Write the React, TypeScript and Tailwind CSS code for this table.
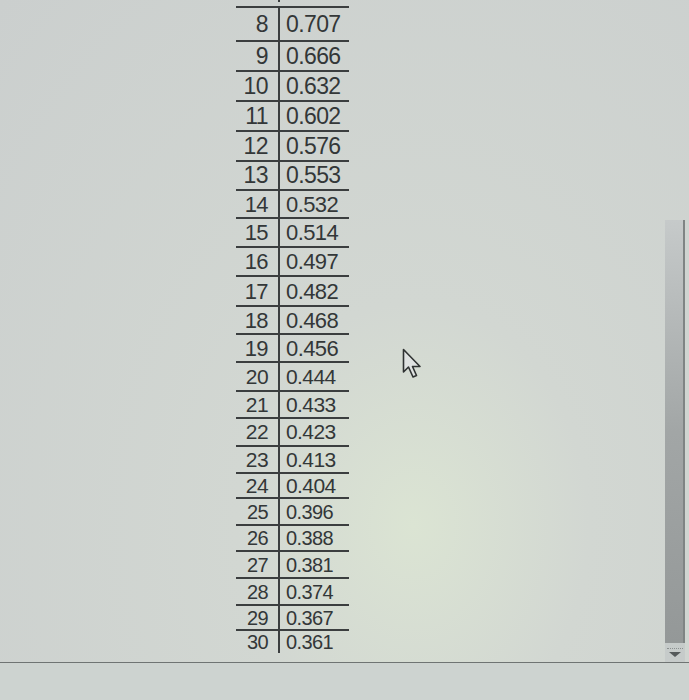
import React from 'react';

interface Fila {
  n: number;
  r: string;
  h: string;
  size: string;
}

// alturas medidas en la foto (la perspectiva achica las filas hacia abajo)
const filas: Fila[] = [
  { n: 7, r: '0.754', h: 'h-[34px]', size: 'text-[23px]' },
  { n: 8, r: '0.707', h: 'h-[34px]', size: 'text-[23px]' },
  { n: 9, r: '0.666', h: 'h-[30px]', size: 'text-[23px]' },
  { n: 10, r: '0.632', h: 'h-[30px]', size: 'text-[23px]' },
  { n: 11, r: '0.602', h: 'h-[30px]', size: 'text-[23px]' },
  { n: 12, r: '0.576', h: 'h-[30px]', size: 'text-[23px]' },
  { n: 13, r: '0.553', h: 'h-[29px]', size: 'text-[23px]' },
  { n: 14, r: '0.532', h: 'h-[28px]', size: 'text-[22px]' },
  { n: 15, r: '0.514', h: 'h-[29px]', size: 'text-[22px]' },
  { n: 16, r: '0.497', h: 'h-[29px]', size: 'text-[22px]' },
  { n: 17, r: '0.482', h: 'h-[30px]', size: 'text-[22px]' },
  { n: 18, r: '0.468', h: 'h-[28px]', size: 'text-[22px]' },
  { n: 19, r: '0.456', h: 'h-[28px]', size: 'text-[22px]' },
  { n: 20, r: '0.444', h: 'h-[29px]', size: 'text-[21px]' },
  { n: 21, r: '0.433', h: 'h-[27px]', size: 'text-[21px]' },
  { n: 22, r: '0.423', h: 'h-[28px]', size: 'text-[21px]' },
  { n: 23, r: '0.413', h: 'h-[27px]', size: 'text-[21px]' },
  { n: 24, r: '0.404', h: 'h-[25px]', size: 'text-[21px]' },
  { n: 25, r: '0.396', h: 'h-[27px]', size: 'text-[20px]' },
  { n: 26, r: '0.388', h: 'h-[26px]', size: 'text-[20px]' },
  { n: 27, r: '0.381', h: 'h-[27px]', size: 'text-[20px]' },
  { n: 28, r: '0.374', h: 'h-[27px]', size: 'text-[20px]' },
  { n: 29, r: '0.367', h: 'h-[25px]', size: 'text-[20px]' },
  { n: 30, r: '0.361', h: 'h-[22px]', size: 'text-[20px]' },
];

const Cursor = () => (
  <svg width="20" height="31" viewBox="0 0 20 31" className="absolute left-[402px] top-[348px]">
    <path
      d="M1.5 1.5 L1.5 24 L6.5 19 L11 29 L14.5 27.5 L10.5 18.5 L18 18.5 Z"
      fill="#dfe2e1"
      stroke="#2f3232"
      strokeWidth="1.6"
      strokeLinejoin="round"
    />
  </svg>
);

const App = () => {
  return (
    <div className="relative w-[689px] h-[700px] overflow-hidden flex flex-col bg-[#cfd2d1] bg-[radial-gradient(ellipse_at_60%_75%,#dbe4d3_0%,#d2d7d2_30%,#cbcfce_100%)] font-['Liberation_Sans',Arial,sans-serif] text-[#333738]">

      {/* Hoja con la tabla + barra de scroll */}
      <div className="flex h-[662px]">
        <div className="flex-1 pl-[236px]">
          <div className="-mt-[26px] w-[113px]">
            {filas.map((f, i) => (
              <div
                key={f.n}
                className={`flex ${f.h} ${f.size} tracking-[-0.6px] ${
                  i < filas.length - 1 ? 'border-b-2 border-[#3b3e3f]' : ''
                } ${i === 0 ? 'items-end pb-[4px]' : ''}`}
              >
                <div className="w-[44px] self-stretch flex items-center justify-end pr-[10px] border-r-2 border-[#3b3e3f]">
                  {f.n}
                </div>
                <div className="flex-1 self-stretch flex items-center pl-[6px]">{f.r}</div>
              </div>
            ))}
          </div>
        </div>

        {/* Scrollbar */}
        <div className="w-[26px] pr-[4px] flex flex-col items-end">
          <div className="h-[220px]" />
          <div className="w-[20px] h-[423px] bg-gradient-to-b from-[#c6caca] via-[#a2a6a6] to-[#949898] border-r-2 border-[#7f8484]" />
          <div className="w-[20px] flex-1 flex flex-col items-center justify-center gap-[3px] bg-[#c6cbca]">
            <div className="w-[16px] border-t border-dotted border-[#8a8f8f]" />
            <div className="w-0 h-0 border-l-[6px] border-r-[6px] border-t-[5px] border-l-transparent border-r-transparent border-t-[#555a5b]" />
          </div>
        </div>
      </div>

      {/* línea inferior de la ventana */}
      <div className="border-t-[1.5px] border-[#6f7473] flex-1 bg-[#cdd3d0]" />

      <Cursor />
    </div>
  );
};

export default App;
